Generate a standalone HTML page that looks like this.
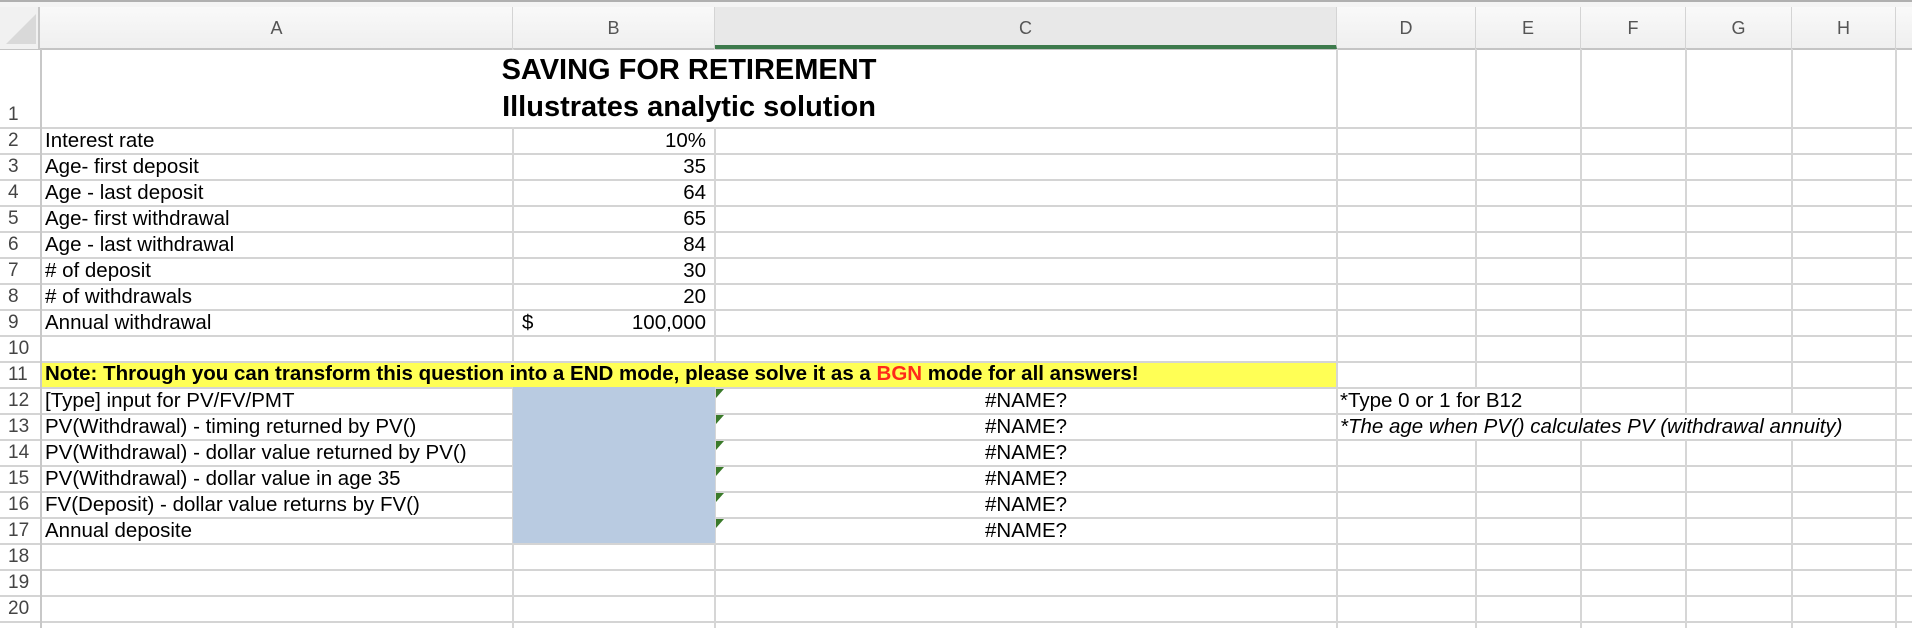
<!DOCTYPE html>
<html><head><meta charset="utf-8"><style>
*{margin:0;padding:0;box-sizing:border-box}
body{width:1912px;height:628px;overflow:hidden;background:#fff;font-family:"Liberation Sans",Arial,sans-serif;position:relative;color:#000}
.a{position:absolute}
.topbar{left:0;top:0;width:1912px;height:10px;background:#f4f4f4;border-top:2px solid #b0b0b0;border-bottom:1px solid #b8b8b8}
.hdr{left:0;top:7px;width:1912px;height:43px;background:linear-gradient(#f9f9f9,#efefef);border-bottom:2px solid #c4c4c4}
.ch{position:absolute;top:7px;height:42px;line-height:42px;text-align:center;font-size:18px;color:#555;border-right:1px solid #d4d4d4}
.grid{left:0;top:127px;width:1912px;height:501px;background-image:linear-gradient(#d4d4d4 0 2px,transparent 2px);background-size:100% 26px}
.v{position:absolute;top:49px;width:2px;height:579px;background:#d6d6d6}
.rn{position:absolute;left:8px;font-size:19px;color:#444;height:26px;line-height:28px}
.t{position:absolute;font-size:20.5px;height:26px;line-height:28px;white-space:nowrap}
.r{text-align:right}
.tri{position:absolute;width:0;height:0;border-top:9px solid #3a7a2a;border-right:8px solid transparent}
</style></head><body>
<div class="a topbar"></div>
<div class="a hdr"></div>
<div class="a" style="left:0;top:7px;width:40px;height:42px;background:#f1f1f1;border-right:2px solid #c8c8c8"></div>
<svg class="a" style="left:4px;top:12px" width="34" height="34"><polygon points="32,2 32,32 2,32" fill="#d9d9d9"/></svg>
<div class="ch" style="left:41px;width:472px">A</div>
<div class="ch" style="left:513px;width:202px">B</div>
<div class="ch" style="left:715px;width:622px;background:#e8e8e8;border-bottom:4px solid #3d7a4c">C</div>
<div class="ch" style="left:1337px;width:139px">D</div>
<div class="ch" style="left:1476px;width:105px">E</div>
<div class="ch" style="left:1581px;width:105px">F</div>
<div class="ch" style="left:1686px;width:106px">G</div>
<div class="ch" style="left:1792px;width:104px">H</div>

<div class="a grid"></div>
<div class="v" style="left:40px;background:#c8c8c8"></div>
<div class="v" style="left:512px"></div>
<div class="v" style="left:714px"></div>
<div class="v" style="left:1336px"></div>
<div class="v" style="left:1475px"></div>
<div class="v" style="left:1580px"></div>
<div class="v" style="left:1685px"></div>
<div class="v" style="left:1791px"></div>
<div class="v" style="left:1895px"></div>
<div class="a" style="left:42px;top:50px;width:1294px;height:77px;background:#fff"></div>
<div class="a" style="left:42px;top:52px;width:1294px;text-align:center;font-size:29px;font-weight:bold;line-height:37px">SAVING FOR RETIREMENT<br>Illustrates analytic solution</div>
<div class="a" style="left:42px;top:363px;width:1294px;height:24px;background:#ffff55"></div>
<div class="t" style="left:45px;top:360px;font-weight:bold">Note: Through you can transform this question into a END mode, please solve it as a <span style="color:#ff2a1a">BGN</span> mode for all answers!</div>
<div class="a" style="left:513px;top:387px;width:202px;height:156px;background:#b9cbe1"></div>

<div class="rn" style="top:101px">1</div>
<div class="rn" style="top:127px">2</div><div class="rn" style="top:153px">3</div><div class="rn" style="top:179px">4</div><div class="rn" style="top:205px">5</div><div class="rn" style="top:231px">6</div><div class="rn" style="top:257px">7</div><div class="rn" style="top:283px">8</div><div class="rn" style="top:309px">9</div><div class="rn" style="top:335px">10</div><div class="rn" style="top:361px">11</div><div class="rn" style="top:387px">12</div><div class="rn" style="top:413px">13</div><div class="rn" style="top:439px">14</div><div class="rn" style="top:465px">15</div><div class="rn" style="top:491px">16</div><div class="rn" style="top:517px">17</div><div class="rn" style="top:543px">18</div><div class="rn" style="top:569px">19</div><div class="rn" style="top:595px">20</div>

<div class="t" style="left:45px;top:127px">Interest rate</div>
<div class="t" style="left:45px;top:153px">Age- first deposit</div>
<div class="t" style="left:45px;top:179px">Age - last deposit</div>
<div class="t" style="left:45px;top:205px">Age- first withdrawal</div>
<div class="t" style="left:45px;top:231px">Age - last withdrawal</div>
<div class="t" style="left:45px;top:257px"># of deposit</div>
<div class="t" style="left:45px;top:283px"># of withdrawals</div>
<div class="t" style="left:45px;top:309px">Annual withdrawal</div>
<div class="t" style="left:45px;top:387px">[Type] input for PV/FV/PMT</div>
<div class="t" style="left:45px;top:413px">PV(Withdrawal) - timing returned by PV()</div>
<div class="t" style="left:45px;top:439px">PV(Withdrawal) - dollar value returned by PV()</div>
<div class="t" style="left:45px;top:465px">PV(Withdrawal) - dollar value in age 35</div>
<div class="t" style="left:45px;top:491px">FV(Deposit) - dollar value returns by FV()</div>
<div class="t" style="left:45px;top:517px">Annual deposite</div>

<div class="t r" style="left:513px;width:193px;top:127px">10%</div>
<div class="t r" style="left:513px;width:193px;top:153px">35</div>
<div class="t r" style="left:513px;width:193px;top:179px">64</div>
<div class="t r" style="left:513px;width:193px;top:205px">65</div>
<div class="t r" style="left:513px;width:193px;top:231px">84</div>
<div class="t r" style="left:513px;width:193px;top:257px">30</div>
<div class="t r" style="left:513px;width:193px;top:283px">20</div>
<div class="t" style="left:522px;top:309px">$</div>
<div class="t r" style="left:513px;width:193px;top:309px">100,000</div>

<div class="tri" style="left:716px;top:389px"></div><div class="tri" style="left:716px;top:415px"></div><div class="tri" style="left:716px;top:441px"></div><div class="tri" style="left:716px;top:467px"></div><div class="tri" style="left:716px;top:493px"></div><div class="tri" style="left:716px;top:519px"></div>
<div class="t" style="left:985px;top:387px">#NAME?</div>
<div class="t" style="left:985px;top:413px">#NAME?</div>
<div class="t" style="left:985px;top:439px">#NAME?</div>
<div class="t" style="left:985px;top:465px">#NAME?</div>
<div class="t" style="left:985px;top:491px">#NAME?</div>
<div class="t" style="left:985px;top:517px">#NAME?</div>

<div class="a" style="left:1338px;top:389px;width:242px;height:24px;background:#fff"></div>
<div class="a" style="left:1338px;top:415px;width:557px;height:24px;background:#fff"></div>
<div class="t" style="left:1340px;top:387px">*Type 0 or 1 for B12</div>
<div class="t" style="left:1340px;top:413px;font-style:italic">*The age when PV() calculates PV (withdrawal annuity)</div>
</body></html>
